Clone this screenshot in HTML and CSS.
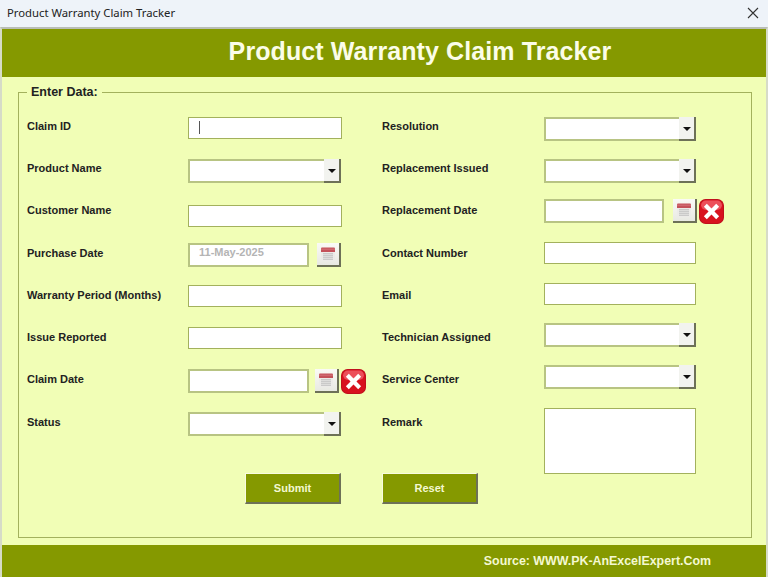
FILE: index.html
```html
<!DOCTYPE html>
<html>
<head>
    <title>Product Warranty Claim Tracker</title>
    <link rel="stylesheet" href="styles.css">
</head>
<body>
    <svg class="defs" width="0" height="0">
        <symbol id="cal" viewBox="0 0 16 16">
            <rect x="1" y="3" width="14" height="12.5" fill="#ecebe8"/>
            <path d="M1 2.5q0-1 1-1h12q1 0 1 1v3.5h-14z" fill="#c4525a"/>
            <path d="M1 3.2h14" stroke="#e08a90" stroke-width="0.6"/>
            <path d="M3 7.5h10M3 9.5h10M3 11.5h10M3 13.5h10M4 7v7M6 7v7M8 7v7M10 7v7M12 7v7" stroke="#bdbdbd" stroke-width="0.6" fill="none"/>
        </symbol>
        <symbol id="del" viewBox="0 0 24 24">
            <rect x="0.5" y="0.5" width="23" height="23" rx="6" fill="#d8121f" stroke="#c0101c"/>
            <rect x="2" y="1.5" width="20" height="9" rx="4.5" fill="#ec4f5a"/>
            <path d="M7.5 7.5l9 9M16.5 7.5l-9 9" stroke="#fff" stroke-width="4" stroke-linecap="square"/>
        </symbol>
    </svg>

    <div class="titlebar">
        <span>Product Warranty Claim Tracker</span>
        <svg class="close" width="12" height="12" viewBox="0 0 12 12"><path d="M1 1l10 10M11 1L1 11" stroke="#333" stroke-width="1.1" fill="none"/></svg>
    </div>

    <div class="app">
        <div class="header">Product Warranty Claim Tracker</div>

        <div class="main">
            <fieldset class="data">
                <legend>Enter Data:</legend>
                <div class="columns">
                    <div class="col">
                        <div class="row"><label>Claim ID</label><div class="input short"><i class="caret"></i></div></div>
                        <div class="row"><label>Product Name</label><div class="input combo"><b class="drop"></b></div></div>
                        <div class="row"><label>Customer Name</label><div class="input short low"></div></div>
                        <div class="row lift1"><label>Purchase Date</label><div class="input date"><span class="hint">11-May-2025</span></div><div class="calbtn"><svg width="16" height="16"><use href="#cal"/></svg></div></div>
                        <div class="row lift1"><label>Warranty Period (Months)</label><div class="input short"></div></div>
                        <div class="row lift1"><label>Issue Reported</label><div class="input short"></div></div>
                        <div class="row lift1"><label>Claim Date</label><div class="input date"></div><div class="calbtn"><svg width="16" height="16"><use href="#cal"/></svg></div><svg class="del" width="25" height="25"><use href="#del"/></svg></div>
                        <div class="row last lift1"><label>Status</label><div class="input combo"><b class="drop"></b></div></div>
                    </div>
                    <div class="col right">
                        <div class="row"><label>Resolution</label><div class="input combo"><b class="drop"></b></div></div>
                        <div class="row"><label>Replacement Issued</label><div class="input combo"><b class="drop"></b></div></div>
                        <div class="row lift2"><label>Replacement Date</label><div class="input date"></div><div class="calbtn"><svg width="16" height="16"><use href="#cal"/></svg></div><svg class="del" width="25" height="25"><use href="#del"/></svg></div>
                        <div class="row lift2"><label>Contact Number</label><div class="input short"></div></div>
                        <div class="row lift3"><label>Email</label><div class="input short"></div></div>
                        <div class="row lift5"><label>Technician Assigned</label><div class="input combo"><b class="drop"></b></div></div>
                        <div class="row lift5"><label>Service Center</label><div class="input combo"><b class="drop"></b></div></div>
                        <div class="row last tall lift5"><label>Remark</label><div class="input memo"></div></div>
                    </div>
                </div>
                <div class="actions">
                    <div class="button">Submit</div>
                    <div class="button">Reset</div>
                </div>
            </fieldset>
        </div>

        <div class="footer">Source: WWW.PK-AnExcelExpert.Com</div>
    </div>
</body>
</html>
```

FILE: styles.css
```css
html, body { margin: 0; height: 100%; overflow: hidden; }
body { display: flex; flex-direction: column; font-family: "Liberation Sans", Arial, sans-serif; background: #eef3f9; }
.defs { position: absolute; }

.titlebar { height: 27px; flex: none; display: flex; align-items: center; justify-content: space-between; padding: 0 9px 2px 7px; box-sizing: border-box; background: #eef3f9; font: 11.3px "Noto Sans", sans-serif; color: #222; }

.app { flex: 1; display: flex; flex-direction: column; border-top: 2px solid #b9bdb6; border-left: 2px solid #d6dbc8; border-right: 2px solid #d6dbc8; min-height: 0; }

.header { height: 48px; flex: none; box-sizing: border-box; display: flex; align-items: center; justify-content: center; padding: 0 0 4px 72px; background: #859900; color: #fbfde8; font-size: 25px; letter-spacing: 0.1px; font-weight: bold; }

.main { flex: 1; background: #f1feb6; padding: 7px 14px 7px 16px; display: flex; min-height: 0; }
.data { flex: 1; margin: 0; padding: 17px 0 0 8px; border: 1px solid #a3b15d; min-width: 0; }
.data legend { padding: 1px 4px 0; font-size: 12.5px; font-weight: bold; line-height: 15px; color: #222; }

.columns { display: grid; grid-template-columns: 355px 1fr; }
.row { height: 42.2px; display: flex; align-items: flex-start; }
.row.last { margin-top: 1px; }
.row label { width: 161px; flex: none; padding-top: 3px; font-size: 11px; font-weight: bold; line-height: 13px; color: #222; }
.right .row label { width: 162px; }
.lift1 > :not(label) { margin-top: -1px; }
.lift2 > :not(label) { margin-top: -2px; }
.lift3 > :not(label) { margin-top: -3px; }
.lift5 > :not(label) { margin-top: -5px; }
.row.tall { height: 59.6px; }

.input { box-sizing: border-box; height: 23px; background: #fff; border: 1px solid #a3b15d; position: relative; }
.short { width: 154px; height: 22px; }
.right .short { width: 152px; }
.combo { width: 153px; height: 24px; border-width: 2px 0 2px 2px; border-color: #b8c483; }
.right .combo { width: 152px; }
.date { width: 121px; height: 24px; border-width: 2px; border-color: #b8c483; }
.right .date { width: 120px; }
.memo { width: 152px; height: 66px; }
.low { margin-top: 4px; }

.caret { position: absolute; left: 10px; top: 3px; width: 1px; height: 13px; background: #555; }
.hint { display: block; padding-left: 9px; font-size: 11px; font-weight: bold; line-height: 14px; color: #b4b4b4; }

.drop { position: absolute; right: 0; top: -2px; bottom: -2px; width: 17px; box-sizing: border-box; background: #f2f3ef; border-right: 2px solid #6d7157; border-bottom: 2px solid #6d7157; }
.drop::after { content: ""; position: absolute; left: 4px; top: 10px; border: 4px solid transparent; border-top: 4px solid #111; border-bottom: 0; }

.calbtn { box-sizing: border-box; width: 24px; height: 24px; margin-left: 8px; display: flex; align-items: center; justify-content: center; background: linear-gradient(#fafaf6, #e8e9e2); border-right: 2px solid #6d7157; border-bottom: 2px solid #6d7157; }
.date + .calbtn:nth-last-child(2) { margin-left: 6px; }
.right .date + .calbtn:nth-last-child(2) { margin-left: 9px; }
.del { margin-left: 2px; flex: none; }

.actions { display: flex; gap: 41px; margin-left: 218px; }
.button { box-sizing: border-box; width: 96px; height: 31px; display: flex; align-items: center; justify-content: center; background: #859900; color: #f4f8d2; font-size: 11px; font-weight: bold; border-left: 1px solid #f8fbe0; border-top: 1px solid #f8fbe0; border-right: 2px solid #6d7157; border-bottom: 2px solid #6d7157; }

.footer { height: 32px; flex: none; box-sizing: border-box; display: flex; align-items: center; justify-content: flex-end; padding: 0 55px 1px 0; background: #859900; color: #f4f8d2; font-size: 12.4px; font-weight: bold; }
```
